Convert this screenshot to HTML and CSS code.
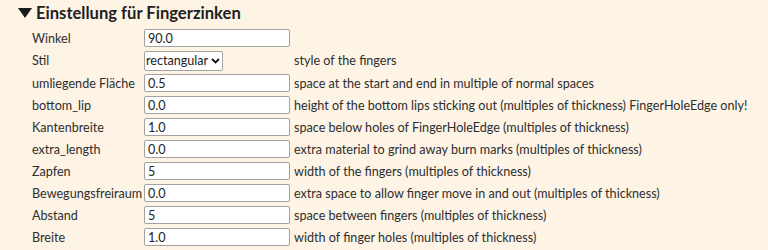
FILE: index.html
```html
<!DOCTYPE html>
<html>
	<head>
		<meta charset="utf-8">
		<title>Einstellung für Fingerzinken</title>
		<link rel="stylesheet" href="styles.css">
	</head>
	<body>
		<div class="group">
			<h3 class="group-title">
				<svg class="arrow" width="14" height="10" viewBox="0 0 14 10"><polygon points="0,0 14,0 7,10" fill="#1a1a1a"/></svg>
				<span>Einstellung für Fingerzinken</span>
			</h3>
			<table class="settings">
				<tr>
					<td class="name">Winkel</td>
					<td class="value"><input type="text" value="90.0"></td>
					<td class="help"></td>
				</tr>
				<tr class="tall">
					<td class="name">Stil</td>
					<td class="value">
						<span class="select-wrap">
							<select>
								<option>rectangular</option>
							</select>
							<svg class="chevron" width="9" height="6" viewBox="0 0 9 6"><polyline points="1,1 4.5,4.5 8,1" fill="none" stroke="#111" stroke-width="1.8"/></svg>
						</span>
					</td>
					<td class="help">style of the fingers</td>
				</tr>
				<tr>
					<td class="name">umliegende Fläche</td>
					<td class="value"><input type="text" value="0.5"></td>
					<td class="help">space at the start and end in multiple of normal spaces</td>
				</tr>
				<tr>
					<td class="name">bottom_lip</td>
					<td class="value"><input type="text" value="0.0"></td>
					<td class="help">height of the bottom lips sticking out (multiples of thickness) FingerHoleEdge only!</td>
				</tr>
				<tr>
					<td class="name">Kantenbreite</td>
					<td class="value"><input type="text" value="1.0"></td>
					<td class="help">space below holes of FingerHoleEdge (multiples of thickness)</td>
				</tr>
				<tr>
					<td class="name">extra_length</td>
					<td class="value"><input type="text" value="0.0"></td>
					<td class="help">extra material to grind away burn marks (multiples of thickness)</td>
				</tr>
				<tr>
					<td class="name">Zapfen</td>
					<td class="value"><input type="text" value="5"></td>
					<td class="help">width of the fingers (multiples of thickness)</td>
				</tr>
				<tr>
					<td class="name">Bewegungsfreiraum</td>
					<td class="value"><input type="text" value="0.0"></td>
					<td class="help">extra space to allow finger move in and out (multiples of thickness)</td>
				</tr>
				<tr>
					<td class="name">Abstand</td>
					<td class="value"><input type="text" value="5"></td>
					<td class="help">space between fingers (multiples of thickness)</td>
				</tr>
				<tr>
					<td class="name">Breite</td>
					<td class="value"><input type="text" value="1.0"></td>
					<td class="help">width of finger holes (multiples of thickness)</td>
				</tr>
			</table>
		</div>
	</body>
</html>
```

FILE: styles.css
```css
body {
	margin: 0;
	background-color: #fdf4e6;
	font-family: Lato, "Open Sans", Arial, sans-serif;
	font-size: 12.6px;
	color: #2e2e2e;
}

.group {
	padding: 2px 0 0 18px;
}

.group-title {
	display: flex;
	align-items: center;
	gap: 4px;
	margin: 0;
	height: 21px;
	font-size: 16.6px;
	font-weight: bold;
	color: #1e1e1e;
}

.arrow {
	display: block;
	margin-top: 0;
}

.settings {
	border-collapse: separate;
	border-spacing: 0 2px;
	margin: 3px 0 0 14px;
}

.settings td {
	padding: 0;
	height: 20px;
	white-space: nowrap;
}

.settings tr.tall td {
	height: 21px;
}

.settings td.name {
	width: 112px;
}

.settings td.value {
	width: 146px;
	padding-right: 4px;
}

.settings input {
	display: block;
	width: 146px;
	height: 18px;
	box-sizing: border-box;
	margin: 0;
	padding: 0 3px;
	border: 1px solid #a3a3a3;
	border-radius: 2px;
	background: #fff;
	font-family: inherit;
	font-size: 12.6px;
	color: #222;
}

.select-wrap {
	position: relative;
	display: block;
	width: 79px;
}

.settings select {
	display: block;
	-webkit-appearance: none;
	appearance: none;
	width: 79px;
	height: 20px;
	box-sizing: border-box;
	margin: 0;
	padding: 0 12px 0 1px;
	border: 1px solid #a3a3a3;
	border-radius: 2px;
	background: #fff;
	font-family: inherit;
	font-size: 12.6px;
	color: #222;
}

.chevron {
	position: absolute;
	right: 3px;
	top: 7px;
	pointer-events: none;
}
```
